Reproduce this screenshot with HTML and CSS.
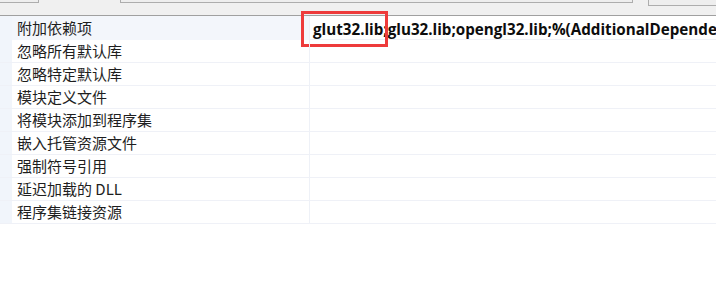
FILE: index.html
```html
<!DOCTYPE html>
<html>
<head>
<meta charset="utf-8">
<link rel="stylesheet" href="styles.css">
</head>
<body>
<div class="strip">
  <div class="tab tab-a"></div>
  <div class="tab tab-b"></div>
  <div class="tab tab-c"></div>
</div>
<div class="grid">
  <div class="row row-first">
    <div class="gutter"></div>
    <div class="name">附加依赖项</div>
    <div class="value"><div class="clip"><span class="val-text">glut32.lib;glu32.lib;opengl32.lib;%(AdditionalDependencies)</span></div><span class="mark"></span></div>
  </div>
  <div class="row"><div class="gutter"></div><div class="name">忽略所有默认库</div><div class="value"></div></div>
  <div class="row"><div class="gutter"></div><div class="name">忽略特定默认库</div><div class="value"></div></div>
  <div class="row"><div class="gutter"></div><div class="name">模块定义文件</div><div class="value"></div></div>
  <div class="row"><div class="gutter"></div><div class="name">将模块添加到程序集</div><div class="value"></div></div>
  <div class="row"><div class="gutter"></div><div class="name">嵌入托管资源文件</div><div class="value"></div></div>
  <div class="row"><div class="gutter"></div><div class="name">强制符号引用</div><div class="value"></div></div>
  <div class="row"><div class="gutter"></div><div class="name">延迟加载的 DLL</div><div class="value"></div></div>
  <div class="row"><div class="gutter"></div><div class="name">程序集链接资源</div><div class="value"></div></div>
</div>
</body>
</html>
```

FILE: styles.css
```css
html, body {
  margin: 0;
  padding: 0;
  background: #ffffff;
  width: 716px;
  height: 282px;
  overflow: hidden;
}
body {
  font-family: "Noto Sans CJK SC", "Noto Sans", sans-serif;
  color: #1e1e1e;
}
.strip {
  height: 15px;
  background: #f0f0f0;
  border-bottom: 1px solid #a0a0a0;
  display: flex;
  align-items: flex-start;
}
.tab {
  box-sizing: border-box;
  background: #eeeeee;
  border: 1px solid #adadad;
  border-top: none;
}
.tab-a {
  width: 39px;
  height: 3px;
  border-left: none;
}
.tab-b {
  margin-left: 81px;
  width: 513px;
  height: 3px;
}
.tab-c {
  margin-left: 15px;
  flex: 1;
  height: 6px;
  border-right: none;
}
.grid {
  display: flex;
  flex-direction: column;
}
.row {
  display: grid;
  grid-template-columns: 12px 297px 1fr;
  height: 23px;
  box-sizing: border-box;
  border-bottom: 1px solid #eff1f7;
}
.row-first {
  height: 24px;
}
.gutter {
  background: #f1f5fb;
}
.name {
  background: #ffffff;
  font-size: 15px;
  line-height: 22px;
  padding-left: 5px;
  white-space: nowrap;
}
.row-first .name {
  background: #f3f6fb;
  line-height: 23px;
}
.value {
  position: relative;
  min-width: 0;
  border-left: 1px solid #eef1f7;
}
.clip {
  overflow: hidden;
  white-space: nowrap;
  padding-left: 3px;
}
.val-text {
  font-family: "Open Sans", "Noto Sans", sans-serif;
  font-weight: bold;
  font-size: 15.2px;
  line-height: 23px;
  color: #0d0d0d;
}
.mark {
  position: absolute;
  left: -9px;
  top: -5px;
  width: 87px;
  height: 36px;
  box-sizing: border-box;
  border: 3px solid #ee3b3b;
}
```
